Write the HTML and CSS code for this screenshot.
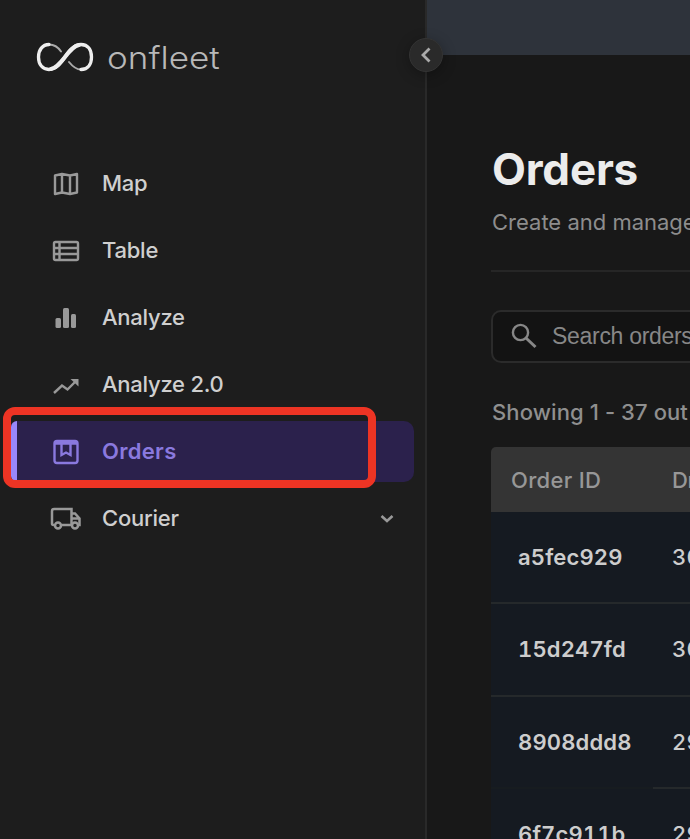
FILE: index.html
```html
<!DOCTYPE html>
<html lang="en">
<head>
    <meta charset="UTF-8">
    <meta name="viewport" content="width=device-width, initial-scale=1.0">
    <title>Orders</title>
    <link rel="stylesheet" href="styles.css">
</head>
<body>
    <div class="app">
        <aside class="sidebar">
            <div class="logo">
                <svg class="logo-mark" width="58" height="30" viewBox="0 0 58 30" fill="none" stroke="#eee" stroke-linecap="round">
                    <path d="M13 2.500C18 2.500 22 5 25 9.500" stroke-width="2" stroke="#aaa"/>
                    <path d="M33 20C37 25 40 27.500 45 27.500" stroke-width="2" stroke="#aaa"/>
                    <path d="M13 2.500C6.500 2.500 2.500 8 2.500 15C2.500 22.500 6.500 27.500 13 27.500C27 27.500 31 2.500 45 2.500C52 2.500 55.500 8 55.500 15C55.500 22 52 27.500 45 27.500" stroke-width="3.300"/>
                    <path d="M15 27C26 25 32 5 43 3" stroke-width="4"/>
                </svg>
                <span class="logo-text">onfleet</span>
            </div>

            <nav class="nav">
                <a class="nav-item">
                    <svg class="icon" width="32" height="28" viewBox="0 0 32 28" fill="none" stroke="currentColor" stroke-width="2.4" stroke-linejoin="round">
                        <path d="M5 5.500L12 4L20 5.500L27 4V22.500L20 24L12 22.500L5 24ZM12 4V22.500M20 5.500V24"/>
                    </svg>
                    <span class="label">Map</span>
                </a>
                <a class="nav-item">
                    <svg class="icon" width="32" height="28" viewBox="0 0 32 28" fill="none" stroke="currentColor" stroke-width="2.4">
                        <rect x="4" y="5" width="24" height="18" rx="1.500"/>
                        <path d="M9.500 5V23M4 11H28M4 17H28"/>
                    </svg>
                    <span class="label">Table</span>
                </a>
                <a class="nav-item">
                    <svg class="icon" width="32" height="28" viewBox="0 0 32 28" fill="currentColor">
                        <rect x="5.500" y="14" width="5.500" height="10" rx="1.500"/>
                        <rect x="13" y="4" width="6" height="20" rx="1.500"/>
                        <rect x="21" y="10" width="5" height="14" rx="1.500"/>
                    </svg>
                    <span class="label">Analyze</span>
                </a>
                <a class="nav-item">
                    <svg class="icon" width="32" height="28" viewBox="0 0 32 28" fill="none" stroke="currentColor" stroke-width="2.4">
                        <path d="M4 22L12 14.500L17.500 18.500L26 10"/>
                        <path d="M20.500 8H28.500V15.500Z" fill="currentColor" stroke="none"/>
                    </svg>
                    <span class="label">Analyze 2.0</span>
                </a>
                <a class="nav-item active">
                    <svg class="icon" width="32" height="28" viewBox="0 0 32 28" fill="none" stroke="currentColor" stroke-width="2.4">
                        <rect x="4.500" y="3" width="23" height="22" rx="2.500"/>
                        <path d="M4.500 5H27.500" stroke-width="3.500"/>
                        <path d="M11.500 6V17L16 14.500L20.500 17V6"/>
                    </svg>
                    <span class="label">Orders</span>
                </a>
                <a class="nav-item">
                    <svg class="icon" width="32" height="28" viewBox="0 0 32 28" fill="none" stroke="currentColor" stroke-width="2.500">
                        <path d="M4.500 20H3.500Q2 20 2 18.500V6Q2 4 4 4H21.500V20H11.500M21.500 8.500H25L29.500 13.500V20H28M21.500 13.500H29"/>
                        <circle cx="8" cy="20.500" r="3"/>
                        <circle cx="25" cy="20.500" r="3"/>
                    </svg>
                    <span class="label">Courier</span>
                    <svg class="chevron" width="14" height="10" viewBox="0 0 14 10" fill="none" stroke="currentColor" stroke-width="2.600">
                        <path d="M1.500 2L7 7L12.500 2"/>
                    </svg>
                </a>
            </nav>

            <button class="collapse-btn" aria-label="Collapse">
                <svg width="12" height="18" viewBox="0 0 12 18" fill="none" stroke="#aaa" stroke-width="2.800">
                    <path d="M9.500 2.500L3 9L9.500 15.500"/>
                </svg>
            </button>
            <div class="highlight"></div>
        </aside>

        <main class="main">
            <div class="topbar"></div>
            <div class="content">
                <h1>Orders</h1>
                <p class="subtitle">Create and manage</p>

                <div class="search">
                    <svg width="26" height="26" viewBox="0 0 26 26" fill="none" stroke="currentColor">
                        <circle cx="9.500" cy="9.500" r="7.600" stroke-width="2.400"/>
                        <path d="M15 15L24.500 24" stroke-width="3"/>
                    </svg>
                    <span>Search orders</span>
                </div>

                <p class="count">Showing 1 - 37 out</p>

                <div class="table">
                    <div class="row head"><div class="cell">Order ID</div><div class="cell">Dr</div></div>
                    <div class="row"><div class="cell">a5fec929</div><div class="cell">30</div></div>
                    <div class="row"><div class="cell">15d247fd</div><div class="cell">30</div></div>
                    <div class="row soft"><div class="cell">8908ddd8</div><div class="cell">29</div></div>
                    <div class="row"><div class="cell">6f7c911b</div><div class="cell">29</div></div>
                </div>
            </div>
        </main>
    </div>
</body>
</html>
```
FILE: styles.css
```css
:root {
    --sidebar-bg: #1d1d1d;
    --main-bg: #181818;
    --row-bg: #151a21;
    --active-bg: #2b214c;
    --accent: #8a79df;
}

* {
    box-sizing: border-box;
    margin: 0;
    padding: 0;
}

body {
    font-family: Inter, "Liberation Sans", sans-serif;
    background: var(--main-bg);
    overflow: hidden;
}

.app {
    display: flex;
    height: 839px;
}

.sidebar {
    position: relative;
    flex: 0 0 427px;
    background: var(--sidebar-bg);
    border-right: 2px solid #292929;
}

.logo {
    display: flex;
    align-items: center;
    gap: 13px;
    height: 74px;
    padding: 40px 0 0 36px;
}

.logo-mark {
    flex-shrink: 0;
}

.logo-text {
    padding-top: 2px;
    font-size: 31px;
    font-weight: 300;
    line-height: 34px;
    color: #b8b8b8;
    transform: scaleX(1.13);
    transform-origin: left center;
}

.nav {
    display: flex;
    flex-direction: column;
    gap: 6px;
    padding: 79px 11px 0 11px;
}

.nav-item {
    display: flex;
    align-items: center;
    height: 61px;
    padding: 0 20px 0 33px;
    border-left: 6px solid transparent;
    color: #999;
}

.label {
    margin-left: 20px;
    padding-bottom: 2px;
    font-size: 22px;
    font-weight: 500;
    letter-spacing: -0.25px;
    color: #cfcfcf;
}

.nav-item.active {
    background: var(--active-bg);
    border-left-color: #9887fa;
    border-radius: 6px 10px 10px 6px;
    color: var(--accent);
}

.active .label {
    font-weight: 600;
    letter-spacing: 0.3px;
    color: var(--accent);
}

.chevron {
    margin-left: auto;
}

.collapse-btn {
    position: absolute;
    top: 38px;
    right: -18px;
    z-index: 2;
    display: flex;
    align-items: center;
    justify-content: center;
    width: 34px;
    height: 34px;
    border: 1px solid #333;
    border-radius: 50%;
    background: #2a2a2a;
    box-shadow: 0 3px 14px rgba(0, 0, 0, 0.3);
}

/* callout around the selected item */
.highlight {
    position: absolute;
    top: 407px;
    left: 3px;
    width: 373px;
    height: 81px;
    border: 8px solid #ed3424;
    border-radius: 12px;
}

.main {
    flex: 1;
    min-width: 0;
    overflow: hidden;
}

.topbar {
    height: 55px;
    background: #2e333b;
}

.content {
    width: 800px;
    padding: 87px 0 0 64px;
}

h1 {
    padding-left: 1px;
    font-size: 44px;
    font-weight: 700;
    line-height: 54px;
    letter-spacing: -0.2px;
    color: #ececec;
}

.subtitle {
    height: 76px;
    padding: 11px 0 0 1px;
    border-bottom: 2px solid #262626;
    font-size: 22px;
    line-height: 30px;
    color: #8d8d8d;
}

.search {
    display: flex;
    align-items: center;
    gap: 15px;
    height: 53px;
    margin-top: 38px;
    padding: 0 0 1px 18px;
    border: 2px solid #2b2b2b;
    border-radius: 10px;
    background: #131313;
    font-family: "Liberation Sans", sans-serif;
    font-size: 23px;
    letter-spacing: -0.3px;
    color: #878787;
}

.count {
    height: 84px;
    padding: 34px 0 0 1px;
    font-size: 22px;
    font-weight: 500;
    line-height: 30px;
    letter-spacing: 0.1px;
    color: #8f8f8f;
}

.table {
    border-radius: 5px 5px 0 0;
    overflow: hidden;
}

.row {
    display: grid;
    grid-template-columns: 162px 1fr;
    height: 92.3px;
    background: var(--row-bg);
    font-size: 22px;
    font-weight: 600;
    font-variant-numeric: tabular-nums;
    letter-spacing: 0.15px;
    color: #cdcdcd;
}

.cell {
    display: flex;
    align-items: center;
    padding-left: 27px;
    border-bottom: 2px solid #25292b;
}

.cell + .cell {
    padding-left: 19px;
    font-weight: 500;
}

.head {
    height: 65px;
    background: #343434;
    font-weight: 500;
    letter-spacing: 0.3px;
    color: #979797;
}

.head .cell {
    padding-left: 20px;
    border-bottom: 0;
}

.head .cell + .cell {
    padding-left: 19px;
    letter-spacing: -0.5px;
}

.soft .cell:first-child {
    border-bottom-color: #171c20;
}
```
